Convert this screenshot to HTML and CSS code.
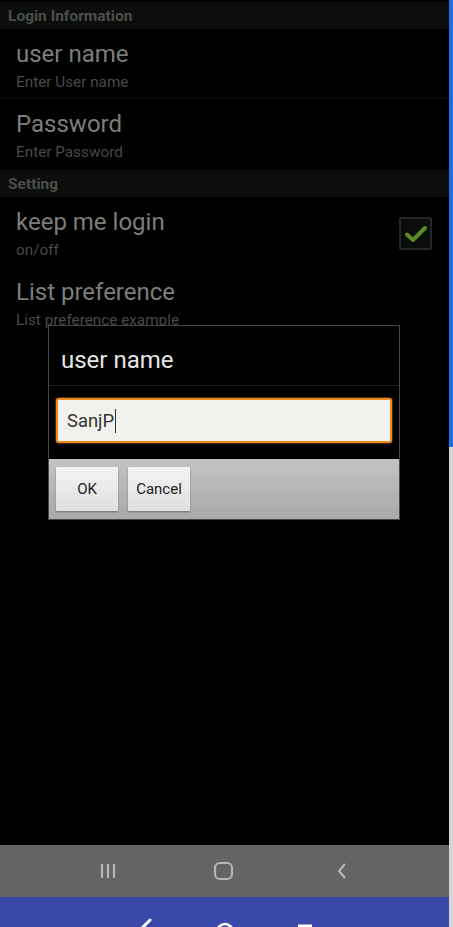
FILE: index.html
```html
<!DOCTYPE html>
<html>
<head>
<meta charset="utf-8">
<link rel="stylesheet" href="styles.css">
</head>
<body>
<div class="screen">
  <div class="app">
    <div class="content">
      <div class="cat">Login Information</div>
      <div class="pref divided">
        <div class="texts">
          <div class="title">user name</div>
          <div class="summary">Enter User name</div>
        </div>
      </div>
      <div class="pref">
        <div class="texts">
          <div class="title">Password</div>
          <div class="summary">Enter Password</div>
        </div>
      </div>
      <div class="cat">Setting</div>
      <div class="pref">
        <div class="texts">
          <div class="title">keep me login</div>
          <div class="summary">on/off</div>
        </div>
        <div class="checkbox">
          <svg width="22" height="18" viewBox="0 0 22 18"><path d="M2 9.5 L8 15 L20 3" fill="none" stroke="#5b8b21" stroke-width="4" stroke-linecap="round" stroke-linejoin="round"/></svg>
        </div>
      </div>
      <div class="pref">
        <div class="texts">
          <div class="title">List preference</div>
          <div class="summary">List preference example</div>
        </div>
      </div>

      <div class="dialog">
        <div class="dlg-title">user name</div>
        <div class="dlg-body">
          <div class="input"><span class="val">SanjP</span><span class="caret"></span></div>
        </div>
        <div class="dlg-buttons">
          <button class="btn ok">OK</button>
          <button class="btn">Cancel</button>
        </div>
      </div>
    </div>
    <div class="navbar">
      <svg width="30" height="20" viewBox="0 0 30 20"><path d="M9 3v14M15 3v14M21 3v14" stroke="#b5b7b4" stroke-width="2.2" fill="none"/></svg>
      <svg width="30" height="20" viewBox="0 0 30 20"><rect x="6" y="2" width="17" height="16" rx="5" stroke="#b5b7b4" stroke-width="2.2" fill="none"/></svg>
      <svg width="30" height="20" viewBox="0 0 30 20"><path d="M20 3 L14 10 L20 17" stroke="#b5b7b4" stroke-width="2.2" fill="none" stroke-linejoin="round"/></svg>
    </div>
    <div class="bottombar">
      <svg class="b1" width="30" height="20" viewBox="0 0 30 20"><path d="M20 5 L12 13" stroke="#ffffff" stroke-width="3" fill="none" stroke-linecap="round"/></svg>
      <svg class="b2" width="30" height="20" viewBox="0 0 30 20"><circle cx="15" cy="15" r="8" stroke="#ffffff" stroke-width="2.6" fill="none"/></svg>
      <svg class="b3" width="30" height="20" viewBox="0 0 30 20"><path d="M8 9h14M8 15h14" stroke="#ffffff" stroke-width="3" fill="none"/></svg>
    </div>
  </div>
  <div class="strip">
    <div class="strip-blue"></div>
    <div class="strip-gray"></div>
  </div>
</div>
</body>
</html>
```
FILE: styles.css
```css
html, body {
  margin: 0;
  padding: 0;
  background: #000;
}
body {
  font-family: Roboto, "Noto Sans", "DejaVu Sans", sans-serif;
}
.screen {
  width: 453px;
  height: 927px;
  display: grid;
  grid-template-columns: 449px 4px;
  overflow: hidden;
}
.app {
  display: flex;
  flex-direction: column;
  height: 927px;
}
.content {
  position: relative;
  flex: 1;
  background: #000;
  padding-top: 1px;
}
.cat {
  height: 27px;
  background: #0c0e0c;
  color: #4b4d4b;
  font-weight: bold;
  font-size: 15.5px;
  line-height: 28px;
  padding-left: 8px;
  margin-top: 1px;
}
.pref {
  height: 70px;
  display: flex;
  align-items: flex-start;
  padding: 11px 17px 0 16px;
  box-sizing: border-box;
}
.pref.divided {
  border-bottom: 1px solid #0e100e;
}
.pref + .pref + .cat { margin-top: 1px; }
.texts {
  flex: 1;
}
.title {
  color: #7c7e7c;
  font-size: 24px;
  line-height: 28px;
}
.summary {
  color: #484a48;
  font-size: 15.3px;
  line-height: 20px;
  margin-top: 4px;
}
.checkbox {
  width: 29px;
  height: 29px;
  border: 2px solid #252725;
  border-radius: 2px;
  background: #0b0d0b;
  display: flex;
  align-items: center;
  justify-content: center;
  margin-top: 9px;
}
.dialog {
  position: absolute;
  left: 48px;
  top: 325px;
  width: 350px;
  border: 1px solid #464846;
  background: #000;
  display: flex;
  flex-direction: column;
}
.dlg-title {
  height: 60px;
  box-sizing: border-box;
  border-bottom: 1px solid #1a1c1a;
  color: #e6e6e6;
  font-size: 24px;
  line-height: 28px;
  padding: 20px 0 0 12px;
}
.dlg-body {
  padding: 12px 7px 16px 7px;
}
.input {
  height: 45px;
  box-sizing: border-box;
  border: 2px solid #f08a1c;
  border-radius: 3px;
  background: #f1f1ed;
  box-shadow: 0 0 2px #f0a040;
  display: flex;
  align-items: center;
  padding-left: 9px;
  font-size: 18.4px;
  color: #333;
}
.caret {
  display: inline-block;
  width: 1px;
  height: 24px;
  background: #333;
  margin-left: 1px;
}
.dlg-buttons {
  height: 60px;
  background: linear-gradient(180deg, #c3c3c3 0%, #a9a9a9 100%);
  display: flex;
  align-items: center;
  gap: 10px;
  padding-left: 7px;
}
.btn {
  width: 62px;
  height: 44px;
  border: none;
  border-radius: 1px;
  background: linear-gradient(180deg, #f2f2f2 0%, #e0e0e0 100%);
  box-shadow: 0 1px 2px rgba(0,0,0,0.35);
  color: #222;
  font-family: Roboto, "Noto Sans", sans-serif;
  font-size: 15px;
  padding: 0;
  margin-top: -1px;
}
.navbar {
  height: 52px;
  background: #636562;
  display: flex;
  align-items: center;
  justify-content: flex-start;
  gap: 86px;
  padding-left: 93px;
}
.bottombar {
  height: 30px;
  background: #3a49a9;
  display: flex;
  align-items: flex-end;
  justify-content: center;
  gap: 50px;
  overflow: hidden;
}
.bottombar svg { display: block; }
.b1 { margin-bottom: -8px; }
.b2 { margin-bottom: -10px; }
.b3 { margin-bottom: -10px; }
.strip {
  display: flex;
  flex-direction: column;
}
.strip-blue {
  height: 447px;
  background: #1a6ee2;
}
.strip-gray {
  flex: 1;
  background: #d6d6d6;
}
```
